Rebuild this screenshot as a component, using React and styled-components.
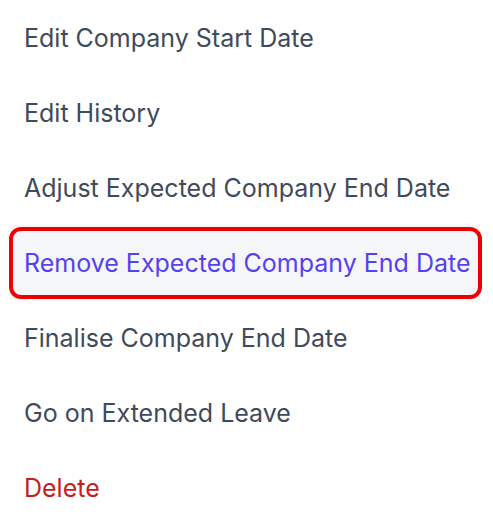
import React from "react";
import styled, { createGlobalStyle } from "styled-components";

const Global = createGlobalStyle`
  html, body { margin: 0; padding: 0; background: #ffffff; }
  body { font-family: Inter, "Noto Sans", sans-serif; }
`;

const Menu = styled.ul`
  list-style: none;
  margin: 0;
  padding: 0 13px 0 10px;
  width: 470px;
`;

const Item = styled.li`
  position: relative;
  height: 75px;
  display: flex;
  align-items: center;
  padding-left: 14px;
  font-size: 25px;
  letter-spacing: 0;
  color: ${(p) => (p.$danger ? "#c42020" : p.$active ? "#5542ee" : "#3f4a5a")};
  background: ${(p) => (p.$active ? "#f5f6fa" : "transparent")};
  &::after {
    content: "";
    display: ${(p) => (p.$active ? "block" : "none")};
    position: absolute;
    top: 2px;
    left: -1px;
    right: -2px;
    bottom: 1px;
    border: 4px solid #ee0000;
    border-radius: 12px;
    pointer-events: none;
  }
`;

const items = [
  { label: "Edit Company Start Date" },
  { label: "Edit History" },
  { label: "Adjust Expected Company End Date" },
  { label: "Remove Expected Company End Date", active: true },
  { label: "Finalise Company End Date" },
  { label: "Go on Extended Leave" },
  { label: "Delete", danger: true },
];

export default function App() {
  return (
    <>
      <Global />
      <Menu>
        {items.map((it) => (
          <Item key={it.label} $active={it.active} $danger={it.danger}>
            {it.label}
          </Item>
        ))}
      </Menu>
    </>
  );
}
